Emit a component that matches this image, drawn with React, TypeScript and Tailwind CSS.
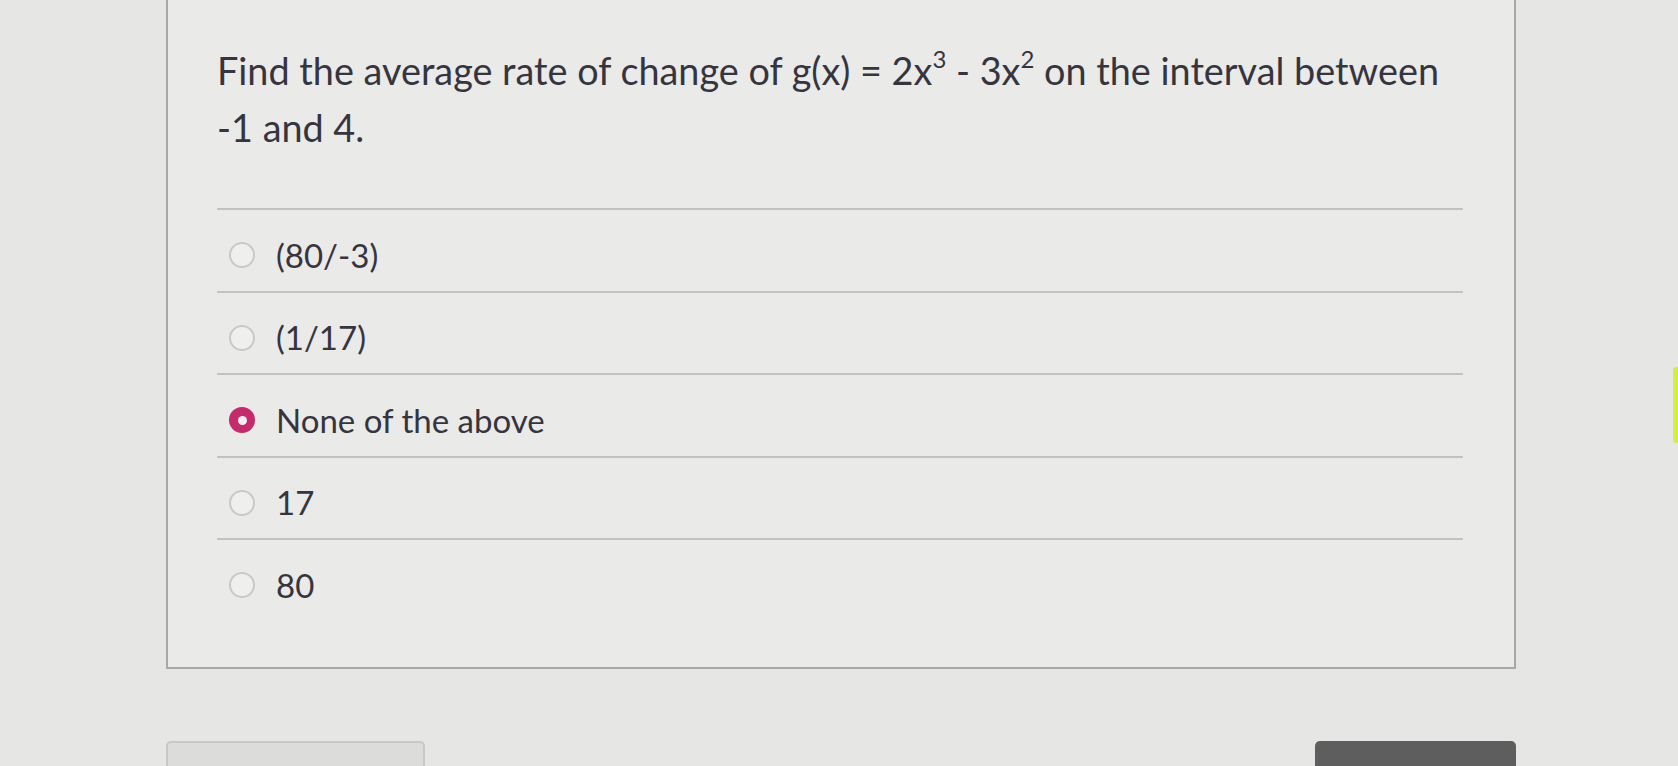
import React from "react";

const options = [
  { label: "(80/-3)", selected: false },
  { label: "(1/17)", selected: false },
  { label: "None of the above", selected: true },
  { label: "17", selected: false },
  { label: "80", selected: false },
];

function Radio({ selected }: { selected: boolean }) {
  if (selected) {
    return (
      <span className="flex h-[26px] w-[26px] shrink-0 items-center justify-center rounded-full bg-[#c62a6b]">
        <span className="h-[9px] w-[9px] rounded-full bg-[#f4f0f2]" />
      </span>
    );
  }
  return (
    <span className="h-[26px] w-[26px] shrink-0 rounded-full border-2 border-[#c9c9c8] bg-[#efefee]" />
  );
}

export default function App() {
  return (
    <div
      className="relative h-[766px] w-[1678px] overflow-hidden bg-[#e6e6e4] text-[#36353f]"
      style={{ fontFamily: "Lato, 'Open Sans', sans-serif" }}
    >
      <div className="ml-[166px] w-[1350px]">
        <div className="h-[669px] border-x-2 border-b-2 border-[#a9a7a9] bg-[#eaeae8] pl-[49px] pr-[51px] pt-[42px]">
          <p className="text-[37.8px] leading-[57px]">
            Find the average rate of change of g(x) = 2x
            <span className="align-[17px] text-[24px] leading-none">3</span> - 3x
            <span className="align-[17px] text-[24px] leading-none">2</span> on the interval between
            -1 and 4.
          </p>
          <div className="mt-[52px]">
            {options.map((o) => (
              <div key={o.label} className="h-[82.5px] border-t-2 border-[#c2c2c0] pt-[10px]">
                <div className="flex h-full items-center gap-[21px] pl-[12px]">
                  <Radio selected={o.selected} />
                  <span className="text-[33px] leading-none">{o.label}</span>
                </div>
              </div>
            ))}
          </div>
        </div>
        <div className="mt-[72px] flex justify-between">
          <div className="h-[50px] w-[259px] rounded-[5px] border-2 border-[#c8c8c7] bg-[#dcdcdb]" />
          <div className="h-[50px] w-[201px] rounded-[5px] bg-[#5e5e5e]" />
        </div>
      </div>
      <div className="absolute right-0 top-[367px] h-[76px] w-[5px] rounded-l-[3px] bg-[#d2ee3e]" />
    </div>
  );
}
